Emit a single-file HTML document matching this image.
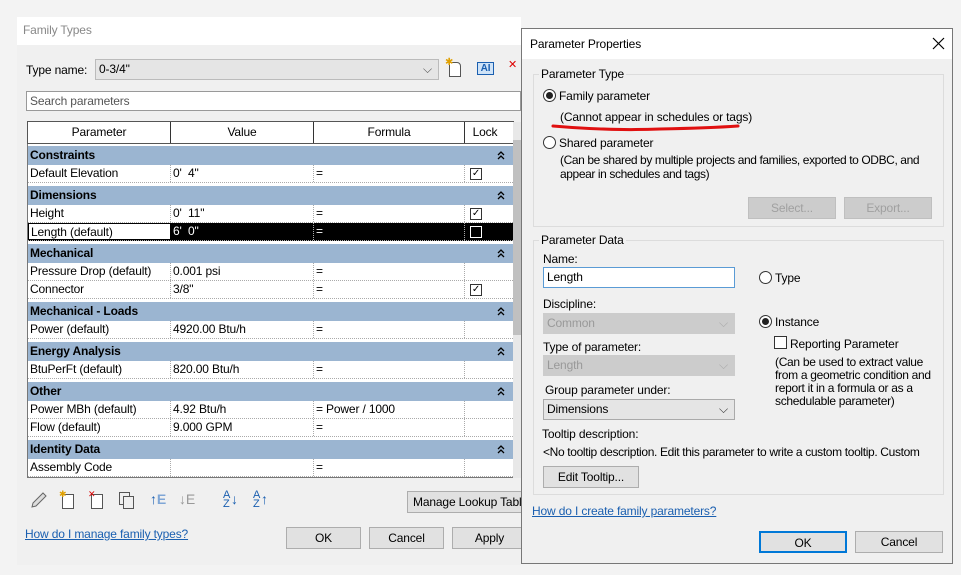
<!DOCTYPE html>
<html><head><style>
*{box-sizing:border-box;margin:0;padding:0}
body{width:961px;height:575px;background:#f3f3f3;font-family:"Liberation Sans",sans-serif;font-size:12px;letter-spacing:-0.15px;color:#000;position:relative;overflow:hidden}
.a{position:absolute;white-space:nowrap}
.g{position:absolute;left:28px;width:485px;background:#9bb5d1;font-weight:bold;height:19px;line-height:19px;padding-left:2px}
.g svg{position:absolute;right:8px;top:5px}
.r{position:absolute;left:28px;width:485px;height:18px;background:#fff;border-bottom:1px dotted #aaa;line-height:17px}
.r div{position:absolute;top:0;height:17px;padding-left:2px;border-right:1px dotted #aaa}
.c1{left:0;width:143px}.c2{left:143px;width:143px}.c3{left:286px;width:151px}.c4{left:437px;width:48px;border-right:none!important}
.cb{position:absolute;left:5px;top:3px;width:12px;height:12px;border:1px solid #333;background:#fff;font-size:10px;line-height:10px;text-align:center}
.btn{position:absolute;background:#e1e1e1;border:1px solid #adadad;text-align:center;line-height:20px;height:22px;white-space:nowrap;overflow:hidden}
.dis{color:#a0a0a0;background:#cccccc;border-color:#bfbfbf}
.rad{position:absolute;width:13px;height:13px;border:1px solid #333;border-radius:50%;background:#fff}
.rad.on::after{content:"";position:absolute;left:2px;top:2px;width:7px;height:7px;border-radius:50%;background:#222}
.sel{position:absolute;height:21px;border:1px solid #ccc;background:#ccc;line-height:19px;padding-left:3px}
</style></head><body>
<div class="a" style="left:17px;top:17px;width:504px;height:548px;background:#f0f0f0"></div>
<div class="a" style="left:17px;top:17px;width:504px;height:28px;background:#fff"></div>
<div class="a" style="left:23px;top:23px;color:#888;font-size:12px">Family Types</div>
<div class="a" style="left:26px;top:63px">Type name:</div>
<div class="a" style="left:95px;top:59px;width:344px;height:21px;background:#e5e5e5;border:1px solid #bbb;line-height:19px;padding-left:3px">0-3/4"<span style="position:absolute;right:6px;color:#555">⌵</span></div>
<div class="a" style="left:449px;top:62px;width:12px;height:15px;border:1px solid #555;border-radius:0 4px 0 0;background:#fff"></div><div class="a" style="left:445px;top:57px;color:#e0a000;font-size:10px">✱</div>
<div class="a" style="left:477px;top:62px;width:17px;height:13px;border:1px solid #1a5fb0;background:#cfe3f7;color:#1a5fb0;font-size:10px;font-weight:bold;line-height:11px;text-align:center">AI</div>
<div class="a" style="left:508px;top:58px;color:#d00;font-size:11px">✕</div>
<div class="a" style="left:26px;top:91px;width:495px;height:20px;background:#fff;border:1px solid #999;line-height:18px;padding-left:3px;color:#555">Search parameters</div>
<div class="a" style="left:27px;top:121px;width:487px;height:357px;border:1px solid #777;background:#fff"></div>
<div class="a" style="left:27px;top:121px;width:487px;height:23px;border:1px solid #555;background:#fff"></div>
<div class="a" style="left:28px;top:122px;width:143px;height:21px;border-right:1px solid #333;text-align:center;line-height:20px">Parameter</div>
<div class="a" style="left:171px;top:122px;width:143px;height:21px;border-right:1px solid #333;text-align:center;line-height:20px">Value</div>
<div class="a" style="left:314px;top:122px;width:151px;height:21px;border-right:1px solid #333;text-align:center;line-height:20px">Formula</div>
<div class="a" style="left:465px;top:122px;width:40px;height:21px;text-align:center;line-height:20px">Lock</div>
<div class="a" style="left:513px;top:122px;width:8px;height:356px;background:#e8e8e8"></div>
<div class="a" style="left:513px;top:140px;width:8px;height:195px;background:#c0c0c0"></div>

<div class="g" style="top:146px">Constraints<svg width="8" height="9"><path d="M1 4 L4 1 L7 4 M1 8 L4 5 L7 8" stroke="#000" stroke-width="1.3" fill="none"/></svg></div>
<div class="r" style="top:165px"><div class="c1">Default Elevation</div><div class="c2">0'&nbsp; 4"</div><div class="c3">=</div><div class="c4"><span class="cb">✓</span></div></div>
<div class="g" style="top:186px">Dimensions<svg width="8" height="9"><path d="M1 4 L4 1 L7 4 M1 8 L4 5 L7 8" stroke="#000" stroke-width="1.3" fill="none"/></svg></div>
<div class="r" style="top:205px"><div class="c1">Height</div><div class="c2">0'&nbsp; 11"</div><div class="c3">=</div><div class="c4"><span class="cb">✓</span></div></div>
<div class="r" style="top:223px;background:#000;color:#fff"><div class="c1" style="background:#fff;color:#000;border:1px solid #000">Length (default)</div><div class="c2">6'&nbsp; 0"</div><div class="c3">=</div><div class="c4"><span class="cb" style="background:#000;border-color:#fff"></span></div></div>
<div class="g" style="top:244px">Mechanical<svg width="8" height="9"><path d="M1 4 L4 1 L7 4 M1 8 L4 5 L7 8" stroke="#000" stroke-width="1.3" fill="none"/></svg></div>
<div class="r" style="top:263px"><div class="c1">Pressure Drop (default)</div><div class="c2">0.001 psi</div><div class="c3">=</div><div class="c4"></div></div>
<div class="r" style="top:281px"><div class="c1">Connector</div><div class="c2">3/8"</div><div class="c3">=</div><div class="c4"><span class="cb">✓</span></div></div>
<div class="g" style="top:302px">Mechanical - Loads<svg width="8" height="9"><path d="M1 4 L4 1 L7 4 M1 8 L4 5 L7 8" stroke="#000" stroke-width="1.3" fill="none"/></svg></div>
<div class="r" style="top:321px"><div class="c1">Power (default)</div><div class="c2">4920.00 Btu/h</div><div class="c3">=</div><div class="c4"></div></div>
<div class="g" style="top:342px">Energy Analysis<svg width="8" height="9"><path d="M1 4 L4 1 L7 4 M1 8 L4 5 L7 8" stroke="#000" stroke-width="1.3" fill="none"/></svg></div>
<div class="r" style="top:361px"><div class="c1">BtuPerFt (default)</div><div class="c2">820.00 Btu/h</div><div class="c3">=</div><div class="c4"></div></div>
<div class="g" style="top:382px">Other<svg width="8" height="9"><path d="M1 4 L4 1 L7 4 M1 8 L4 5 L7 8" stroke="#000" stroke-width="1.3" fill="none"/></svg></div>
<div class="r" style="top:401px"><div class="c1">Power MBh (default)</div><div class="c2">4.92 Btu/h</div><div class="c3">= Power / 1000</div><div class="c4"></div></div>
<div class="r" style="top:419px"><div class="c1">Flow (default)</div><div class="c2">9.000 GPM</div><div class="c3">=</div><div class="c4"></div></div>
<div class="g" style="top:440px">Identity Data<svg width="8" height="9"><path d="M1 4 L4 1 L7 4 M1 8 L4 5 L7 8" stroke="#000" stroke-width="1.3" fill="none"/></svg></div>
<div class="r" style="top:459px"><div class="c1">Assembly Code</div><div class="c2"></div><div class="c3">=</div><div class="c4"></div></div>

<svg class="a" style="left:29px;top:490px" width="20" height="20"><path d="M3 17 L4 13 L14 3 L17 6 L7 16 Z" fill="#ddd" stroke="#666"/></svg>
<div class="a" style="left:62px;top:494px;width:12px;height:15px;border:1px solid #555;background:#fff"></div><div class="a" style="left:59px;top:489px;color:#e0a000;font-size:9px">✱</div>
<div class="a" style="left:91px;top:494px;width:12px;height:15px;border:1px solid #555;background:#fff"></div><div class="a" style="left:88px;top:489px;color:#d00;font-size:9px">✕</div>
<div class="a" style="left:119px;top:492px;width:11px;height:13px;border:1px solid #555"></div><div class="a" style="left:123px;top:496px;width:11px;height:13px;border:1px solid #555;background:#f0f0f0"></div>
<div class="a" style="left:150px;top:491px;color:#1a5fb0;font-size:14px;font-weight:bold">↑<span style="color:#7fa6d6">E</span></div>
<div class="a" style="left:179px;top:491px;color:#999;font-size:14px">↓E</div>
<div class="a" style="left:223px;top:491px;color:#1a5fb0;font-size:11px;line-height:9px">A<br>Z</div><div class="a" style="left:231px;top:491px;color:#1a5fb0;font-size:14px">↓</div>
<div class="a" style="left:253px;top:491px;color:#1a5fb0;font-size:11px;line-height:9px">A<br>Z</div><div class="a" style="left:261px;top:491px;color:#1a5fb0;font-size:14px">↑</div>
<div class="btn" style="left:407px;top:491px;width:120px;text-align:left;padding-left:5px">Manage Lookup Tables</div>
<div class="a" style="left:25px;top:527px;color:#1a5fb0;text-decoration:underline">How do I manage family types?</div>
<div class="btn" style="left:286px;top:527px;width:75px">OK</div>
<div class="btn" style="left:369px;top:527px;width:75px">Cancel</div>
<div class="btn" style="left:452px;top:527px;width:75px">Apply</div>

<div class="a" style="left:521px;top:28px;width:432px;height:536px;background:#f0f0f0;border:1px solid #777"></div>
<div class="a" style="left:522px;top:29px;width:430px;height:30px;background:#fff"></div>
<div class="a" style="left:530px;top:37px">Parameter Properties</div>
<svg class="a" style="left:932px;top:37px" width="13" height="13"><path d="M1 1 L12 12 M12 1 L1 12" stroke="#000" stroke-width="1.2"/></svg>
<div class="a" style="left:533px;top:74px;width:411px;height:153px;border:1px solid #dcdcdc"></div>
<div class="a" style="left:539px;top:67px;background:#f0f0f0;padding:0 2px">Parameter Type</div>
<div class="rad on" style="left:543px;top:89px"></div><div class="a" style="left:559px;top:89px">Family parameter</div>
<div class="a" style="left:560px;top:110px">(Cannot appear in schedules or tags)</div>
<svg class="a" style="left:550px;top:120px" width="195" height="14"><path d="M3 6 Q60 11 110 9 Q160 8 188 6" stroke="#e01010" stroke-width="3" fill="none" stroke-linecap="round"/></svg>
<div class="rad" style="left:543px;top:136px"></div><div class="a" style="left:559px;top:136px">Shared parameter</div>
<div class="a" style="left:560px;top:153px;line-height:14px;letter-spacing:-0.4px">(Can be shared by multiple projects and families, exported to ODBC, and<br>appear in schedules and tags)</div>
<div class="btn dis" style="left:748px;top:197px;width:88px">Select...</div>
<div class="btn dis" style="left:844px;top:197px;width:88px">Export...</div>
<div class="a" style="left:533px;top:240px;width:411px;height:255px;border:1px solid #dcdcdc"></div>
<div class="a" style="left:539px;top:233px;background:#f0f0f0;padding:0 2px">Parameter Data</div>
<div class="a" style="left:543px;top:252px">Name:</div>
<div class="a" style="left:543px;top:267px;width:192px;height:21px;background:#fff;border:1px solid #5a9bd5;line-height:19px;padding-left:3px">Length</div>
<div class="rad" style="left:759px;top:271px"></div><div class="a" style="left:775px;top:271px">Type</div>
<div class="a" style="left:543px;top:297px">Discipline:</div>
<div class="sel" style="left:543px;top:313px;width:192px;color:#999">Common<span style="position:absolute;right:6px;color:#aaa">⌵</span></div>
<div class="rad on" style="left:759px;top:315px"></div><div class="a" style="left:775px;top:315px">Instance</div>
<div class="a" style="left:774px;top:336px;width:13px;height:13px;border:1px solid #333;background:#fff"></div><div class="a" style="left:790px;top:337px">Reporting Parameter</div>
<div class="a" style="left:775px;top:356px;line-height:13px;letter-spacing:-0.3px">(Can be used to extract value<br>from a geometric condition and<br>report it in a formula or as a<br>schedulable parameter)</div>
<div class="a" style="left:543px;top:340px">Type of parameter:</div>
<div class="sel" style="left:543px;top:355px;width:192px;color:#999">Length<span style="position:absolute;right:6px;color:#aaa">⌵</span></div>
<div class="a" style="left:545px;top:383px">Group parameter under:</div>
<div class="sel" style="left:543px;top:399px;width:192px;background:#e5e5e5;border-color:#aaa">Dimensions<span style="position:absolute;right:6px;color:#333">⌵</span></div>
<div class="a" style="left:542px;top:427px">Tooltip description:</div>
<div class="a" style="left:543px;top:445px;letter-spacing:-0.35px">&lt;No tooltip description. Edit this parameter to write a custom tooltip. Custom</div>
<div class="btn" style="left:543px;top:466px;width:96px">Edit Tooltip...</div>
<div class="a" style="left:532px;top:504px;color:#1a5fb0;text-decoration:underline">How do I create family parameters?</div>
<div class="btn" style="left:759px;top:531px;width:88px;border:2px solid #0078d7">OK</div>
<div class="btn" style="left:855px;top:531px;width:88px">Cancel</div>
</body></html>
